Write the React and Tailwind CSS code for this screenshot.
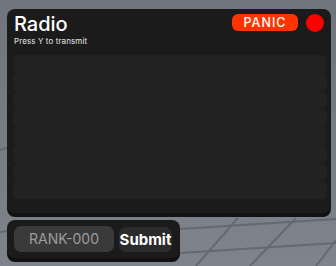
import React from "react";

const rows = [0, 1, 2, 3, 4, 5, 6, 7];

export default function App() {
  return (
    <div
      className="relative w-[336px] h-[266px] overflow-hidden bg-[#7b8089]"
      style={{ fontFamily: "Inter, 'Noto Sans', sans-serif" }}
    >
      <svg className="absolute inset-0" width="336" height="266" viewBox="0 0 336 266">
        <defs>
          <linearGradient id="sky" x1="0" y1="0" x2="0" y2="1">
            <stop offset="0" stopColor="#6f747d" />
            <stop offset="1" stopColor="#7e838c" />
          </linearGradient>
        </defs>
        <rect width="336" height="266" fill="url(#sky)" />
        <g stroke="#5f636b" strokeWidth="2" fill="none" opacity="0.8">
          <line x1="180" y1="229" x2="336" y2="219" />
          <line x1="180" y1="253" x2="336" y2="243" />
          <line x1="196" y1="266" x2="238" y2="218" />
          <line x1="250" y1="266" x2="296" y2="218" />
          <line x1="316" y1="266" x2="336" y2="240" />
          <line x1="0" y1="232" x2="7" y2="231" />
          <line x1="0" y1="150" x2="7" y2="148" />
        </g>
      </svg>

      <div className="relative flex flex-col pl-[7px] pt-[9px]">
        <div className="w-[324px] h-[204px] rounded-[8px] bg-[#1b1b1b] shadow-[0_4px_0_#111111] flex flex-col">
          <div className="flex justify-between pt-[3px] pl-[7px] pr-[7px]">
            <div className="flex flex-col">
              <div className="text-[20px] leading-[24px] text-white font-medium">Radio</div>
              <div className="text-[8px] leading-[10px] text-[#e6e6e6] tracking-[0.1px]">Press Y to transmit</div>
            </div>
            <div className="flex items-start gap-[8px] pt-[2px]">
              <div className="w-[66px] h-[17px] rounded-[6px] bg-[#ff3300] flex items-center justify-center text-white text-[12.5px] leading-[13px] font-medium tracking-[1px]">
                PANIC
              </div>
              <div className="w-[18px] h-[18px] rounded-full bg-[#ff0000]" />
            </div>
          </div>
          <div className="mt-[9px] ml-[6px] w-[314px] flex flex-col">
            {rows.map((r) => (
              <div key={r} className="h-[18px] rounded-[6px] bg-[#222222]" />
            ))}
          </div>
        </div>

        <div className="mt-[7px] w-[173px] h-[38px] rounded-[8px] bg-[#1b1b1b] shadow-[0_4px_0_#111111] flex items-center pl-[7px] gap-[5px]">
          <div className="w-[100px] h-[26px] rounded-[7px] bg-[#3a3a3a] flex items-center justify-center text-[#9c9c9c] text-[14px] leading-[14px]">
            RANK-000
          </div>
          <div className="w-[53px] h-[25px] rounded-[7px] bg-[#2b2b2b] flex items-center justify-center text-white text-[15px] leading-[15px] font-bold whitespace-nowrap">
            Submit
          </div>
        </div>
      </div>
    </div>
  );
}
